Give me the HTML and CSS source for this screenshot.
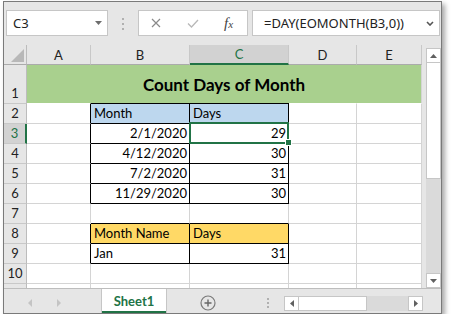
FILE: index.html
```html
<!DOCTYPE html>
<html>
<head>
<meta charset="utf-8">
<link rel="stylesheet" href="styles.css">
</head>
<body>
<div class="window">
  <div class="toolbar">
    <div class="namebox"><span>C3</span><svg width="7" height="4" viewBox="0 0 7 4"><polygon points="0,0 7,0 3.5,4" fill="#6d6d6d"/></svg></div>
    <div class="vdots"><i></i><i></i><i></i></div>
    <div class="fbtns">
      <svg class="ix" width="10" height="10" viewBox="0 0 10 10"><path d="M1 1L9 9M9 1L1 9" stroke="#8a8a8a" stroke-width="1.2" fill="none"/></svg>
      <svg class="ick" width="12" height="9" viewBox="0 0 12 9"><path d="M1 4.5L4.5 8L11 1" stroke="#b8b8b8" stroke-width="1.3" fill="none"/></svg>
      <span class="fx">f<span class="fxx">x</span></span>
    </div>
    <div class="formula"><span>=DAY(EOMONTH(B3,0))</span><svg width="8" height="5" viewBox="0 0 8 5"><path d="M1 1L4 4L7 1" stroke="#555" stroke-width="1.6" fill="none"/></svg></div>
  </div>

  <div class="sheet">
    <div class="grid">
      <div class="corner"><svg width="13" height="13" viewBox="0 0 13 13"><polygon points="13,0 13,13 0,13" fill="#b8b8b8"/></svg></div>
      <div class="ch">A</div><div class="ch">B</div><div class="ch sel">C</div><div class="ch">D</div><div class="ch">E</div>

      <div class="rh r1">1</div>
      <div class="c title">Count Days of Month</div>

      <div class="rh r2">2</div>
      <div class="c r2 kl"></div>
      <div class="c kt k blue">Month</div>
      <div class="c kt k blue">Days</div>
      <div class="c r2"></div><div class="c r2"></div>

      <div class="rh sel">3</div>
      <div class="c kl"></div>
      <div class="c k num">2/1/2020</div>
      <div class="c k num cur">29<span class="selbox"><span class="handle"></span></span></div>
      <div class="c"></div><div class="c"></div>

      <div class="rh">4</div>
      <div class="c kl"></div>
      <div class="c k num">4/12/2020</div>
      <div class="c k num">30</div>
      <div class="c"></div><div class="c"></div>

      <div class="rh">5</div>
      <div class="c kl"></div>
      <div class="c k num">7/2/2020</div>
      <div class="c k num">31</div>
      <div class="c"></div><div class="c"></div>

      <div class="rh">6</div>
      <div class="c kl"></div>
      <div class="c k num">11/29/2020</div>
      <div class="c k num">30</div>
      <div class="c"></div><div class="c"></div>

      <div class="rh">7</div>
      <div class="c"></div>
      <div class="c kb"></div>
      <div class="c kb"></div>
      <div class="c"></div><div class="c"></div>

      <div class="rh">8</div>
      <div class="c kl"></div>
      <div class="c k gold">Month Name</div>
      <div class="c k gold">Days</div>
      <div class="c"></div><div class="c"></div>

      <div class="rh">9</div>
      <div class="c kl"></div>
      <div class="c k">Jan</div>
      <div class="c k num">31</div>
      <div class="c"></div><div class="c"></div>

      <div class="rh">10</div>
      <div class="c"></div><div class="c"></div><div class="c"></div><div class="c"></div><div class="c"></div>

      <div class="rh"></div>
      <div class="c"></div><div class="c"></div><div class="c"></div><div class="c"></div><div class="c"></div>
    </div>
    <div class="vscroll">
      <div class="sbtn"><svg width="7" height="4" viewBox="0 0 7 4"><polygon points="0,4 7,4 3.5,0" fill="#606060"/></svg></div>
      <div class="vthumb"></div>
      <div class="vtrack"></div>
      <div class="sbtn"><svg width="7" height="4" viewBox="0 0 7 4"><polygon points="0,0 7,0 3.5,4" fill="#606060"/></svg></div>
    </div>
  </div>

  <div class="tabbar">
    <div class="nav">
      <svg width="4" height="8" viewBox="0 0 4 8"><polygon points="4,0 4,8 0,4" fill="#c4c4c4"/></svg>
      <svg class="navr" width="4" height="8" viewBox="0 0 4 8"><polygon points="0,0 0,8 4,4" fill="#c4c4c4"/></svg>
    </div>
    <div class="tab">Sheet1</div>
    <svg class="plus" width="16" height="16" viewBox="0 0 16 16"><circle cx="8" cy="8" r="7" stroke="#7a7a7a" stroke-width="1.2" fill="none"/><path d="M8 4.5V11.5M4.5 8H11.5" stroke="#666" stroke-width="1.4"/></svg>
    <div class="hdots"><i></i><i></i><i></i></div>
    <div class="hscroll">
      <div class="sbtn"><svg width="4" height="7" viewBox="0 0 4 7"><polygon points="4,0 4,7 0,3.5" fill="#606060"/></svg></div>
      <div class="hthumb"></div>
      <div class="htrack"></div>
      <div class="sbtn"><svg width="4" height="7" viewBox="0 0 4 7"><polygon points="0,0 0,7 4,3.5" fill="#606060"/></svg></div>
    </div>
  </div>
</div>
</body>
</html>
```

FILE: styles.css
```css
body {
  margin: 0;
  background: #fff;
  font-family: Lato, "Liberation Sans", sans-serif;
}

.window {
  margin: 1px 0 0 3px;
  width: 437px;
  height: 311px;
  border: 1px solid #7a7a7a;
  background: #e6e6e6;
  box-shadow: 3px 3px 5px rgba(0, 0, 0, 0.35);
  display: flex;
  flex-direction: column;
  overflow: hidden;
}

/* formula bar */
.toolbar {
  height: 43px;
  flex: none;
  box-sizing: border-box;
  padding: 8px 0 0 2px;
  display: flex;
  align-items: flex-start;
  font-family: "Noto Sans", "Open Sans", sans-serif;
  font-size: 13px;
}

.namebox {
  width: 102px;
  height: 26px;
  box-sizing: border-box;
  border: 1px solid #c6c6c6;
  background: #fff;
  display: flex;
  align-items: center;
  justify-content: space-between;
  padding: 0 5px 0 6px;
  color: #222;
}

.vdots {
  width: 30px;
  display: flex;
  flex-direction: column;
  align-items: center;
  gap: 3px;
  padding-top: 8px;
}

.vdots i, .hdots i {
  display: block;
  width: 2px;
  height: 2px;
  background: #b0b0b0;
}

.fbtns {
  width: 110px;
  height: 26px;
  box-sizing: border-box;
  border: 1px solid #c6c6c6;
  background: #fff;
  display: flex;
  align-items: center;
  padding-left: 12px;
}

.ick {
  margin-left: 26px;
}

.fx {
  margin-left: 25px;
  font-family: "Liberation Serif", serif;
  font-style: italic;
  font-size: 15px;
  color: #444;
  line-height: 1;
}

.fxx {
  font-size: 11px;
}

.formula {
  margin-left: 4px;
  width: 188px;
  height: 26px;
  box-sizing: border-box;
  border: 1px solid #c6c6c6;
  background: #fff;
  display: flex;
  align-items: center;
  justify-content: space-between;
  padding: 0 5px 0 11px;
  color: #222;
}

/* sheet */
.sheet {
  height: 243px;
  flex: none;
  display: flex;
}

.grid {
  width: 418px;
  height: 243px;
  overflow: hidden;
  background: #fff;
  display: grid;
  grid-template-columns: 23px 64px 99px 99px 68px 65px;
  grid-template-rows: 20px 38px 21px repeat(9, 20px);
}

.grid > div {
  box-sizing: border-box;
  min-width: 0;
}

.c {
  border-right: 1px solid #d4d4d4;
  border-bottom: 1px solid #d4d4d4;
  display: flex;
  align-items: flex-end;
  padding: 0 2px 2px 3px;
  font-size: 13px;
  line-height: 16px;
  white-space: nowrap;
  color: #000;
}

.corner {
  background: #e6e6e6;
  border-right: 1px solid #bcbcbc;
  border-bottom: 1px solid #ababab;
  display: flex;
  justify-content: flex-end;
  align-items: flex-end;
  padding: 0 2px 2px 0;
}

.ch {
  background: #e6e6e6;
  border-right: 1px solid #c8c8c8;
  border-bottom: 1px solid #ababab;
  display: flex;
  align-items: center;
  justify-content: center;
  font-size: 13px;
  color: #222;
}

.ch.sel {
  background: #d2d2d2;
  color: #217346;
  border-bottom: 2px solid #217346;
}

.rh {
  background: #e6e6e6;
  border-right: 1px solid #bcbcbc;
  border-bottom: 1px solid #c8c8c8;
  display: flex;
  align-items: flex-end;
  justify-content: center;
  padding-bottom: 2px;
  font-size: 13px;
  line-height: 16px;
  color: #222;
}

.rh.r1 {
  border-bottom: none;
}

.rh.r2 {
  border-top: 1px solid #c8c8c8;
}

.rh.sel {
  background: #d2d2d2;
  color: #217346;
  border-right: 2px solid #217346;
}

.title {
  grid-column: span 5;
  background: #a9d08e;
  border-bottom: none;
  justify-content: center;
  align-items: center;
  padding: 2px 0 0 0;
  font-weight: bold;
  font-size: 17px;
}

.r2 {
  border-top: 1px solid #fff;
}

.kt {
  border-top: 1px solid #000;
}

.k {
  border-right-color: #000;
  border-bottom-color: #000;
}

.kl {
  border-right-color: #000;
}

.kb {
  border-bottom-color: #000;
}

.num {
  justify-content: flex-end;
}

.blue {
  background: #bdd7ee;
}

.gold {
  background: #ffd966;
}

.cur {
  position: relative;
}

.selbox {
  position: absolute;
  left: -1px;
  top: -2px;
  right: -1px;
  bottom: -1px;
  border: 2px solid #217346;
  z-index: 2;
}

.handle {
  position: absolute;
  right: -5px;
  bottom: -4px;
  width: 5px;
  height: 5px;
  background: #217346;
  border: 1px solid #fff;
}

/* scrollbars */
.vscroll {
  width: 15px;
  margin: 3px 0 0 4px;
  display: flex;
  flex-direction: column;
}

.sbtn {
  width: 15px;
  height: 15px;
  flex: none;
  box-sizing: border-box;
  border: 1px solid #c6c6c6;
  background: #fff;
  display: flex;
  align-items: center;
  justify-content: center;
}

.vthumb {
  height: 116px;
  box-sizing: border-box;
  border: 1px solid #c6c6c6;
  border-top: none;
  background: #fff;
}

.vtrack {
  flex: 1;
  background: #dadada;
}

/* tab bar */
.tabbar {
  height: 25px;
  flex: none;
  box-sizing: border-box;
  border-top: 1px solid #bdbdbd;
  display: flex;
  align-items: flex-start;
}

.nav {
  width: 97px;
  display: flex;
  align-items: center;
  padding: 10px 0 0 24px;
  box-sizing: border-box;
}

.navr {
  margin-left: 25px;
}

.tab {
  width: 66px;
  height: 24px;
  box-sizing: border-box;
  background: #fff;
  border-left: 1px solid #c6c6c6;
  border-right: 1px solid #c6c6c6;
  box-shadow: inset 0 -2px 0 #217346;
  display: flex;
  align-items: center;
  justify-content: center;
  font-weight: bold;
  font-size: 13px;
  color: #217346;
}

.plus {
  margin: 6px 0 0 33px;
}

.hdots {
  margin: 9px 0 0 51px;
  display: flex;
  flex-direction: column;
  gap: 2px;
}

.hscroll {
  margin: 7px 0 0 15px;
  display: flex;
}

.hthumb {
  width: 68px;
  height: 15px;
  box-sizing: border-box;
  border: 1px solid #c6c6c6;
  border-left: none;
  background: #fff;
}

.htrack {
  width: 41px;
  height: 15px;
  background: #dadada;
}
```
